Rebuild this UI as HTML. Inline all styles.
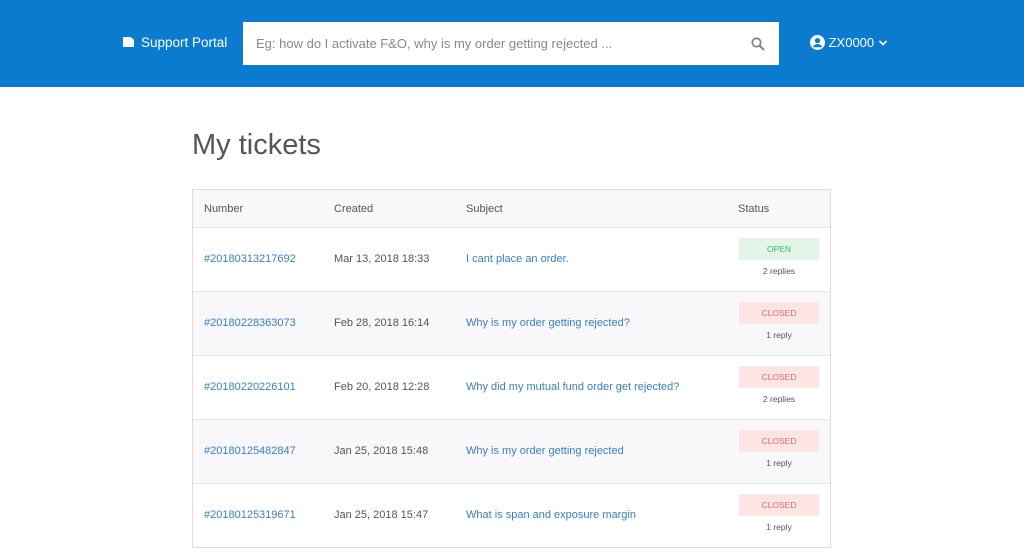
<!DOCTYPE html><html><head><style>
body{margin:0;width:1024px;height:555px;overflow:hidden;background:#fff;font-family:"Liberation Sans",sans-serif;}
.hd{position:absolute;left:0;top:0;width:1024px;height:87px;background:#0b7bcf;}
.logo{position:absolute;left:123px;top:35px;color:#fff;font-size:13.5px;}
.logo i{position:absolute;left:0;top:2px;width:11px;height:10px;background:#fff;clip-path:polygon(0 0,70% 0,100% 30%,100% 100%,0 100%);}
.srch{position:absolute;left:243px;top:22px;width:536px;height:43px;background:#fff;}
.srch span{position:absolute;left:13px;top:14px;font-size:13px;color:#888;}
.user{position:absolute;left:810px;top:35px;color:#fff;font-size:13px;}
h1{position:absolute;left:192px;top:129px;margin:0;font-weight:normal;font-size:29px;color:#555;}
.tb{position:absolute;left:192px;top:189px;width:637px;border:1px solid #ddd;}
.r{position:relative;height:63px;border-top:1px solid #e6e6e6;font-size:11px;}
.r.h{height:37px;border-top:none;background:#f8f8fa}
.r div{position:absolute;top:25px}
.r.h div{top:13px;color:#555}
.c1{left:11px;color:#3a7dc0}.c2{left:141px;color:#555}.c3{left:273px;color:#3a7dc0}
.b{position:absolute;left:546px;top:10px!important;width:80px;height:22px;line-height:22px;text-align:center;font-size:8.5px}
.o{background:#e3f5e8;color:#3bb66a}.cl{background:#fde5e3;color:#e46a64}
.rp{left:546px;width:80px;text-align:center;top:38px!important;font-size:8.5px;color:#555}
</style></head><body>
<div class="hd">
<div class="logo"><i></i><span style="margin-left:18px">Support Portal</span></div>
<div class="srch"><span>Eg: how do I activate F&amp;O, why is my order getting rejected ...</span>
<svg style="position:absolute;left:508px;top:15px" width="14" height="14" viewBox="0 0 14 14"><circle cx="5.5" cy="5.5" r="4.2" fill="none" stroke="#888" stroke-width="1.8"/><path d="M8.5 8.5L13 13" stroke="#888" stroke-width="2.2"/></svg></div>
<div class="user"><svg width="15" height="15" viewBox="0 0 16 16" style="vertical-align:-3px"><circle cx="8" cy="8" r="8" fill="#fff"/><circle cx="8" cy="6" r="2.8" fill="#0b7bcf"/><path d="M3 13c1-2.5 3-3.3 5-3.3s4 .8 5 3.3" fill="#0b7bcf"/></svg> ZX0000 <svg width="10" height="8" viewBox="0 0 10 8"><path d="M1.5 2l3.5 3.5L8.5 2" stroke="#fff" stroke-width="1.6" fill="none"/></svg></div>
</div>
<h1>My tickets</h1>
<div class="tb">
<div class="r h"><div class="c1" style="color:#555">Number</div><div class="c2">Created</div><div class="c3" style="color:#555">Subject</div><div style="left:545px">Status</div></div>
<div class="r" style="background:#fff"><div class="c1">#20180313217692</div><div class="c2">Mar 13, 2018 18:33</div><div class="c3">I cant place an order.</div><div class="b o">OPEN</div><div class="rp">2 replies</div></div>
<div class="r" style="background:#f8f8fa"><div class="c1">#20180228363073</div><div class="c2">Feb 28, 2018 16:14</div><div class="c3">Why is my order getting rejected?</div><div class="b cl">CLOSED</div><div class="rp">1 reply</div></div>
<div class="r" style="background:#fff"><div class="c1">#20180220226101</div><div class="c2">Feb 20, 2018 12:28</div><div class="c3">Why did my mutual fund order get rejected?</div><div class="b cl">CLOSED</div><div class="rp">2 replies</div></div>
<div class="r" style="background:#f8f8fa"><div class="c1">#20180125482847</div><div class="c2">Jan 25, 2018 15:48</div><div class="c3">Why is my order getting rejected</div><div class="b cl">CLOSED</div><div class="rp">1 reply</div></div>
<div class="r" style="background:#fff"><div class="c1">#20180125319671</div><div class="c2">Jan 25, 2018 15:47</div><div class="c3">What is span and exposure margin</div><div class="b cl">CLOSED</div><div class="rp">1 reply</div></div>
</div>
</body></html>
